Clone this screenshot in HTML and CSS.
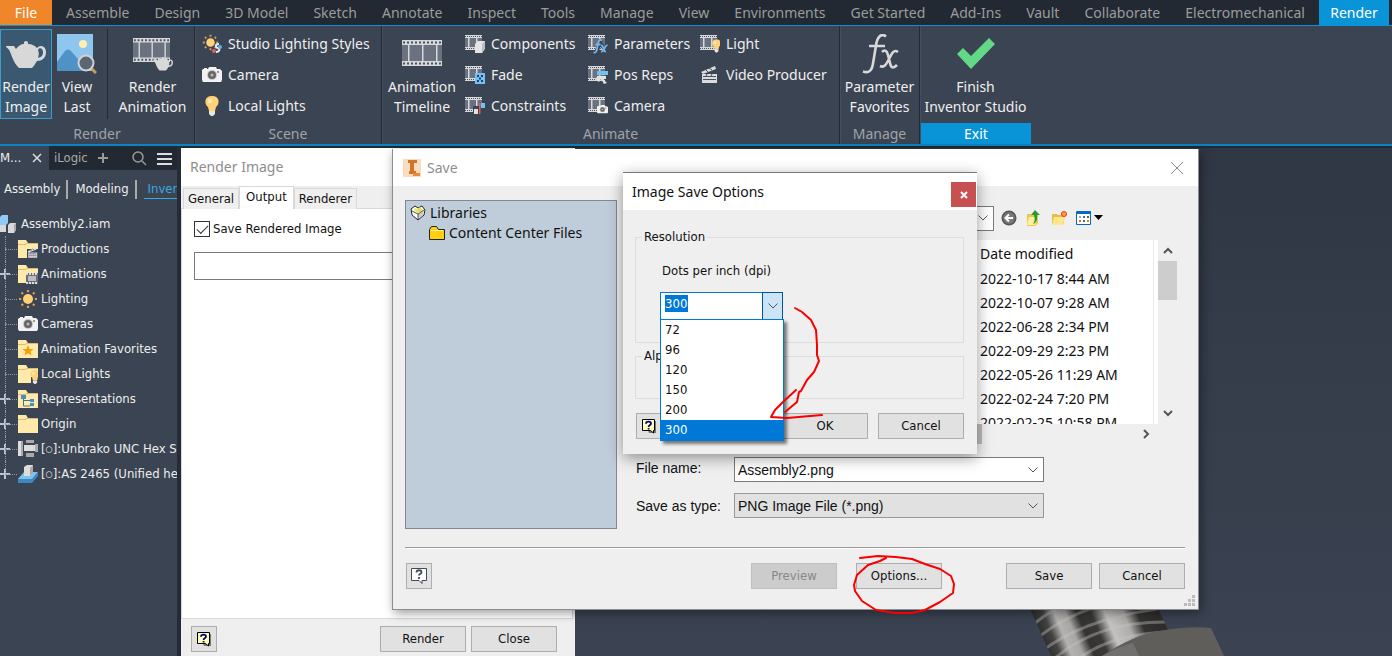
FILE: index.html
```html
<!DOCTYPE html>
<html lang="en">
<head>
<meta charset="utf-8">
<title>Inventor Studio</title>
<link rel="stylesheet" href="styles.css">
</head>
<body>
<svg class="defs" aria-hidden="true">
  <symbol id="film" viewBox="0 0 40 26">
    <path fill="#6a7280" d="M0 0h40v26H0z"/>
    <path fill="#d6d8da" d="M0 0h40v5H0zM0 21h40v5H0zM6 5h1.500v16H6zM20 5h1.500v16H20zM34 5h1.500v16H34z"/>
    <path stroke="#4a5160" stroke-width="2" stroke-dasharray="2 2" d="M1 2.500h39M1 23.500h39"/>
  </symbol>
  <symbol id="film-s" viewBox="0 0 20 20">
    <path fill="#6a7280" d="M0 1h17v15H0z"/>
    <path fill="#d6d8da" d="M0 1h17v3H0zM0 13h17v3H0zM3 4h1.500v9H3zM11 4h1.500v9H11z"/>
    <path stroke="#4a5160" stroke-dasharray="1 1" d="M0 2.500h17M0 14.500h17"/>
  </symbol>
  <symbol id="teapot" viewBox="0 0 40 28">
    <path fill="#d8d8d8" d="M18 3c-1-4 5-4 4 0 4 0 7 2 9 4 3-4 9-2 9 4 0 6-4 9-9 9-2 3-3 5-5 7H13c-3-3-5-6-6-9C5 14 4 8 0 6l0-1h8l2 3c2-3 5-5 8-5zM32 9c1 2 1 5 0 8 4-1 5-3 5-6 0-4-4-5-5-2z"/>
  </symbol>
  <symbol id="bulb" viewBox="0 0 20 20">
    <path fill="#ffd27a" d="M10 0c8 0 8 8 4 11l-1 4H7l-1-4C2 8 2 0 10 0z"/>
    <path fill="#fff0c8" d="M6 3h4v4H6z" opacity=".7"/><path fill="#e6e6e6" d="M7 15h6v3l-2 2H9l-2-2z"/>
  </symbol>
  <symbol id="camera" viewBox="0 0 20 20">
    <path fill="#f2f2f2" d="M1 4h1V3h3v1h1l1-2h7l1 2h3l2 2v9l-1 2H1l-1-2V5z"/>
    <circle cx="10" cy="10" r="5" fill="#c4c4c4"/><circle cx="10" cy="10" r="4" fill="#666"/><circle cx="10" cy="10" r="1.500" fill="#bbb"/><path fill="#999" d="M15 6h2v2h-2z"/>
  </symbol>
  <symbol id="sun" viewBox="0 0 20 20">
    <circle cx="10" cy="10" r="5" fill="#ffd27a"/>
    <path stroke="#d9a04e" stroke-width="2.200" stroke-dasharray="2.200 50" d="M10 1v9M10 19v-9M1 10h9M19 10h-9M3.500 3.500L10 10M16.500 3.500L10 10M3.500 16.500L10 10M16.500 16.500L10 10"/>
  </symbol>
  <symbol id="folder" viewBox="0 0 20 20">
    <path fill="#ffe9ab" d="M0 1h8l2 3h10v15H0z"/><path fill="none" stroke="#d8bd78" d="M0 5.500h7l2-1h11"/>
  </symbol>
  <symbol id="clapper" viewBox="0 0 20 20">
    <path fill="#dcdcdc" d="M1 7l14-6 1 3L3 9zM2 9h15v9H2z"/>
    <path stroke="#4a5160" d="M5 4l3 3M9 3l3 2M3 11.500h13M3 14.500h13M7 9l-1 2M12 9l-1 2"/>
  </symbol>
  <symbol id="chev" viewBox="0 0 12 12"><path fill="none" stroke="#555" d="M1.500 3.500L6 8l4.500-4.500"/></symbol>
  <symbol id="help" viewBox="0 0 16 16">
    <path fill="#777" d="M3 3h12v12H8z"/><path fill="#ffffb8" stroke="#000" d="M1.500 1.500h12v11h-1v2.500l-3-2.500h-8z"/>
    <path fill="none" stroke="#00007a" stroke-width="1.800" d="M5 5.800c0-3 5-3 5 0 0 1.300-2.400 1.200-2.400 3.200M7.600 10v1.600"/>
  </symbol>
</svg>

<div class="app">
  <nav class="tabs" aria-label="Ribbon tabs">
    <button class="tab file">File</button>
    <div class="tab-list">
      <button class="tab">Assemble</button><button class="tab">Design</button><button class="tab">3D Model</button><button class="tab">Sketch</button><button class="tab">Annotate</button><button class="tab">Inspect</button><button class="tab">Tools</button><button class="tab">Manage</button><button class="tab">View</button><button class="tab">Environments</button><button class="tab">Get Started</button><button class="tab">Add-Ins</button><button class="tab">Vault</button><button class="tab">Collaborate</button><button class="tab">Electromechanical</button>
    </div>
    <button class="tab active">Render</button>
  </nav>

  <header class="ribbon">
    <section class="group g-render">
      <div class="tools">
        <button class="big on"><svg width="40" height="40" viewBox="0 0 40 40"><use href="#teapot" y="7" width="40" height="28"/></svg>Render<br>Image</button>
        <button class="big view"><svg width="40" height="40" viewBox="0 0 40 40"><path fill="#8fc6ee" d="M0 0h36v37H0z"/><path fill="#4e92c6" d="M0 28L8 17q3-3 6 0l12 14v6H0z"/><circle cx="26" cy="10" r="4" fill="#fff0b0"/><path stroke="#c99a5e" stroke-width="3" d="M34 34l5 5"/><circle cx="29" cy="29" r="7.500" fill="#5d6573" stroke="#cfd2d6" stroke-width="2"/></svg>View<br>Last</button>
        <i class="divider"></i>
        <button class="big anim"><svg width="40" height="40" viewBox="0 0 40 40"><use href="#film" y="3" width="37" height="26"/><use href="#teapot" x="20" y="23" width="20" height="14"/></svg>Render<br>Animation</button>
      </div>
      <h2>Render</h2>
    </section>
    <section class="group g-scene">
      <div class="tools col">
        <button class="cmd"><svg width="20" height="20"><use href="#sun" width="17" height="17"/><path fill="none" stroke="#ececec" stroke-width="2" d="M17 10c-5 0-3 4-1 4s2 4-2 4"/><circle cx="12" cy="17" r="2" fill="#e0606a"/><circle cx="18" cy="13" r="2" fill="#58b4ee"/></svg>Studio Lighting Styles</button>
        <button class="cmd"><svg width="20" height="20"><use href="#camera"/></svg>Camera</button>
        <button class="cmd"><svg width="20" height="20"><use href="#bulb"/></svg>Local Lights</button>
      </div>
      <h2>Scene</h2>
    </section>
    <section class="group g-animate">
      <div class="tools">
        <button class="big timeline"><svg width="40" height="40" viewBox="0 0 40 40"><use href="#film" y="6" width="40" height="26"/></svg>Animation<br>Timeline</button>
        <div class="col c1">
          <button class="cmd"><svg width="20" height="20"><use href="#film-s"/><path fill="#e4e4e4" d="M10 10l3-3h7v7l-3 5h-7z"/><path fill="#bdbdbd" d="M17 10l3-3v8l-3 4z"/></svg>Components</button>
          <button class="cmd"><svg width="20" height="20"><use href="#film-s"/><path fill="#72c0f4" d="M10 8h10v11H10z"/><path fill="#20435f" d="M12 10h2v2h-2zM16 10h2v2h-2zM14 12.500h2v2h-2zM12 15h2v2h-2zM16 15h2v2h-2z"/></svg>Fade</button>
          <button class="cmd"><svg width="20" height="20"><use href="#film-s"/><path fill="#3b4453" d="M8 10h12v9H8z"/><path fill="#e0e0e0" d="M9 13h4v5H9z"/><path fill="#e45b5b" d="M14 7h1.500v11H14z"/><path fill="#72c0f4" d="M16 7h4v5h-4z"/></svg>Constraints</button>
        </div>
        <div class="col c2">
          <button class="cmd"><svg width="20" height="20"><use href="#film-s"/><path fill="none" stroke="#3b4453" stroke-width="4" d="M13 6l-5 13M13 10l6 8"/><path fill="none" stroke="#72b9ee" stroke-width="1.800" d="M14 6.500c-3-2-4 2-4.500 6-.5 4-1.500 7-4 6M7.500 10.500h5M13 11.500c3-1 2 7 5 6M19.500 11.500c-3-1-3 7-6.500 6"/></svg>Parameters</button>
          <button class="cmd"><svg width="20" height="20"><use href="#film-s"/><path fill="#72c0f4" d="M9 6h11v4H9z"/><path fill="#e0e0e0" d="M9 11h9v3h-3l4 4-3 1-3-5-2 3-3-2z"/></svg>Pos Reps</button>
          <button class="cmd"><svg width="20" height="20"><use href="#film-s"/><use href="#camera" x="9" y="8" width="11" height="11"/></svg>Camera</button>
        </div>
        <div class="col c3">
          <button class="cmd"><svg width="20" height="20"><use href="#film-s"/><use href="#bulb" x="10" y="5" width="13" height="14"/></svg>Light</button>
          <button class="cmd"><svg width="20" height="20"><use href="#clapper"/></svg>Video Producer</button>
        </div>
      </div>
      <h2>Animate</h2>
    </section>
    <section class="group g-manage">
      <div class="tools"><button class="big"><svg width="40" height="40" viewBox="0 0 40 40"><path fill="none" stroke="#d8d8d8" stroke-width="2.600" d="M26 2.500c-5-4-9 1-10 9l-3 18c-1 7-4 10-10 8M9 12h16M22 18c3-3 5-1 6 3l2 8c1 5 3 6 7 2M38 18c-4-3-6 1-9 7-3 6-5 9-9 7"/></svg>Parameter<br>Favorites</button></div>
      <h2>Manage</h2>
    </section>
    <section class="group g-exit">
      <div class="tools"><button class="big"><svg width="40" height="40" viewBox="0 0 40 40"><path fill="#62d986" d="M1 20l6-6 8 8L33 4l6 6-24 25z"/></svg>Finish<br>Inventor Studio</button></div>
      <h2 class="exit">Exit</h2>
    </section>
  </header>

  <main class="workspace">
    <aside class="browser">
      <div class="panel-tabs">
        <button class="ptab sel">M... <svg width="10" height="10"><path stroke="#ddd" stroke-width="1.500" d="M1 1l8 8M9 1l-8 8"/></svg></button>
        <button class="ptab">iLogic</button>
        <button class="ptab" aria-label="Add"><svg width="10" height="10"><path stroke="#999" stroke-width="2" d="M5 0v10M0 5h10"/></svg></button>
        <button class="ptab find" aria-label="Search"><svg width="15" height="15"><circle cx="6" cy="6" r="5" fill="none" stroke="#999" stroke-width="1.500"/><path stroke="#999" stroke-width="1.500" d="M10 10l4 4"/></svg></button>
        <button class="ptab" aria-label="Menu"><svg width="15" height="13"><path stroke="#ddd" stroke-width="2" d="M0 2h15M0 7h15M0 12h15"/></svg></button>
      </div>
      <nav class="modes"><a href="#a">Assembly</a><a href="#m">Modeling</a><a class="cur" href="#i">Inventor Studio</a></nav>
      <ul class="tree">
        <li class="root"><svg width="18" height="20"><path fill="#8fcbf5" d="M0 3l2-2h6v8l-2 2H0z"/><path fill="#d9d9d9" d="M0 11h6v7H0zM8 11l2-2h6v7l-2 3H8z"/><path fill="#aaa" d="M14 11l2-2v7l-2 3z"/></svg>Assembly2.iam</li>
        <li><svg width="20" height="20"><use href="#folder"/><path fill="#3b4453" d="M9 10h11v9H9z"/><use href="#clapper" x="9" y="8" width="12" height="12"/></svg>Productions</li>
        <li class="plus"><svg width="20" height="20"><use href="#folder"/><path fill="#666d78" d="M8 9h12v11H8z"/><path fill="none" stroke="#ddd" stroke-width="2" stroke-dasharray="2 1" d="M8 10h12M8 19h12"/><path fill="#bbb" d="M10 12h8v5h-8z"/></svg>Animations</li>
        <li><svg width="20" height="20"><use href="#sun"/></svg>Lighting</li>
        <li><svg width="20" height="20"><use href="#camera"/></svg>Cameras</li>
        <li><svg width="20" height="20"><use href="#folder"/><path fill="#f6a000" d="M10 6l1.500 4h4l-3 2.500 1 4-3.500-2.300-3.500 2.300 1-4-3-2.500h4z"/></svg>Animation Favorites</li>
        <li><svg width="20" height="20"><use href="#folder"/><path fill="#3b4453" d="M13 13h7v7h-7z"/><use href="#bulb" x="10" y="6" width="14" height="14"/></svg>Local Lights</li>
        <li class="plus"><svg width="20" height="20"><use href="#folder"/><path fill="none" stroke="#47708d" d="M5.500 8v9H12M6 11.500h6"/><path fill="#3f8fc9" d="M3 6h5v4H3zM12 10h4v3h-4zM12 14h4v3h-4z"/></svg>Representations</li>
        <li class="plus"><svg width="20" height="20"><use href="#folder"/></svg>Origin</li>
        <li class="plus"><svg width="20" height="20"><path fill="#ddd" d="M0 2h5v15H0zM6 6h11v6H6z"/><path fill="#aaa" d="M8 1h8v3H8zM8 14h8v4H8zM17 5h3v8h-3zM3 2h2v15H3z"/></svg><span>[<small>○</small>]:Unbrako UNC Hex S</span></li>
        <li class="plus"><svg width="20" height="20"><path fill="#7cc1f0" d="M0 15l6-7h14l-6 8z"/><path fill="#3f86bd" d="M0 15h14l6-7v4l-6 7H0z"/><path fill="#ddd" d="M6 3l3-2h6v8l-3 3H6z"/><path fill="#aaa" d="M12 4l3-3v8l-3 3z"/></svg><span>[<small>○</small>]:AS 2465 (Unified he</span></li>
      </ul>
    </aside>

    <div class="viewport">
      <svg class="bolt" width="200" height="50" viewBox="1028 606 200 50" aria-hidden="true">
        <defs>
          <linearGradient id="steel" gradientUnits="userSpaceOnUse" x1="1030" y1="612" x2="1150" y2="562">
            <stop offset="0" stop-color="#2c2c2c"/><stop offset=".09" stop-color="#444"/><stop offset=".17" stop-color="#b5b3b1"/><stop offset=".25" stop-color="#a8a6a4"/><stop offset=".33" stop-color="#353433"/><stop offset=".43" stop-color="#3a3938"/><stop offset=".53" stop-color="#c4c2c0"/><stop offset=".66" stop-color="#aeacaa"/><stop offset=".76" stop-color="#343332"/><stop offset="1" stop-color="#2b2a29"/>
          </linearGradient>
          <clipPath id="shank"><path d="M1029 606h128l12 26-60 24h-58z"/></clipPath>
        </defs>
        <g clip-path="url(#shank)">
          <path fill="url(#steel)" d="M1028 606h145v50h-145z"/>
          <g fill="none" stroke="#c4c2c0" stroke-width="3" opacity=".4"><path d="M1031 627q15-15 34-21"/><path d="M1036 639q30-24 64-33"/><path d="M1041 652q40-32 116-43"/><path d="M1053 660q42-38 112-38"/><path d="M1072 664q34-30 97-32"/></g>
        </g>
        <path fill="#605e5b" d="M1102 656q32-22 63-26 26-4 46-2l13 28z"/><path fill="#72706e" d="M1102 656q18-10 31-13l6 13z"/>
      </svg>
    </div>
  </main>

  <section class="window render-win" aria-label="Render Image">
    <h3 class="title">Render Image</h3>
    <div class="page-tabs"><button>General</button><button class="sel">Output</button><button>Renderer</button></div>
    <div class="page">
      <label class="check"><input type="checkbox" checked>Save Rendered Image</label>
      <input class="path" type="text" aria-label="Image path">
    </div>
    <footer><button class="btn help" aria-label="Help"><svg width="16" height="16"><use href="#help"/></svg></button><button class="btn push">Render</button><button class="btn">Close</button></footer>
  </section>

  <section class="window save-win" aria-label="Save">
    <h3 class="title"><svg width="18" height="18"><path fill="#fbdcc0" d="M0 0h18v18H0z"/><path fill="#cf7628" d="M5 1h9v3h-3v8h2v3H6v-3h1V4H5z"/><path fill="#ee8a30" d="M10 14h7v3h-7z"/></svg>Save<button class="close" aria-label="Close"><svg width="14" height="14"><path stroke="#888" d="M1 1l12 12M13 1L1 13"/></svg></button></h3>
    <div class="save-body">
      <ul class="libs">
        <li><svg width="17" height="16"><path fill="#fff" stroke="#222" d="M1 4l4-3 3 2 4-2 3 4-1 5-6 5-6-5z"/><path fill="#ccc" d="M8 9l6-4-1 5-5 4z"/><path fill="#e8e04a" d="M5 3l2 2 1-1 2-2 3 3-5 3-4-3z"/><path fill="none" stroke="#555" d="M2 6l6 3 6-4M8 9v5"/></svg>Libraries</li>
        <li class="sub"><svg width="17" height="16"><path fill="#ffcf10" stroke="#222" d="M.500 4.500l2-3h5l2 3h6v10H.500z"/><path stroke="#fff0a0" d="M2 5.500h12"/></svg>Content Center Files</li>
      </ul>
      <div class="files">
        <div class="bar">
          <span class="combo"><select aria-label="Save in"><option></option></select><svg width="12" height="12"><use href="#chev"/></svg></span>
          <button aria-label="Back"><svg width="16" height="16"><circle cx="8" cy="8" r="7.500" fill="#555"/><circle cx="8" cy="8" r="6" fill="#777"/><path fill="none" stroke="#fff" stroke-width="2" d="M12 8H5M8 4.500L4.500 8 8 11.500"/></svg></button>
          <button aria-label="Up"><svg width="16" height="16"><path fill="#eec64e" d="M1 4h4l1 1h6v8l-3 3H1z"/><path fill="#fff0a0" d="M3 7h9l-3 8H1z"/><path fill="#2a9a2a" d="M9 0l5 5h-3c1 5-1 8-4 9 2-3 2-5 1-9H5z"/></svg></button>
          <button aria-label="New folder"><svg width="16" height="16"><path fill="#e9bb49" d="M1 4h5l1 1h6v8l-2 2H1z"/><path fill="#ffe58c" d="M3 7h11l-2 8H1z"/><circle cx="13" cy="4" r="2.500" fill="#ffa12e" stroke="#e33a16"/></svg></button>
          <button class="views" aria-label="Views"><svg width="27" height="16"><path fill="#fff" stroke="#0767c8" d="M.500 1.500h14v13H.500z"/><path fill="#0767c8" d="M1 1h14v3H1z"/><path fill="#9aa" d="M3 6h2v2H3z"/><path fill="#27a" d="M7 6h2v2H7zM7 10h2v2H7z"/><path fill="#373" d="M11 6h2v2h-2z"/><path fill="#e64" d="M3 10h2v2H3z"/><path fill="#c90" d="M11 10h2v2h-2z"/><path d="M18 5h9l-4.500 5z"/></svg></button>
        </div>
        <div class="list">
          <div class="rows"><table>
            <thead><tr><th>Date modified</th></tr></thead>
            <tbody><tr><td>2022-10-17 8:44 AM</td></tr><tr><td>2022-10-07 9:28 AM</td></tr><tr><td>2022-06-28 2:34 PM</td></tr><tr><td>2022-09-29 2:23 PM</td></tr><tr><td>2022-05-26 11:29 AM</td></tr><tr><td>2022-02-24 7:20 PM</td></tr><tr><td>2022-02-25 10:58 PM</td></tr></tbody>
          </table></div>
          <div class="vbar"><svg width="12" height="20"><path fill="none" stroke="#555" stroke-width="2" d="M2 13l4-4 4 4"/></svg><i></i><svg class="down" width="12" height="20"><path fill="none" stroke="#555" stroke-width="2" d="M2 7l4 4 4-4"/></svg></div>
          <div class="hbar"><i></i><svg width="22" height="20"><path fill="none" stroke="#555" stroke-width="2" d="M8 6l4 4-4 4"/></svg></div>
        </div>
        <div class="field"><label for="fname">File name:</label><span class="combo white"><input id="fname" type="text" value="Assembly2.png"><svg width="12" height="12"><use href="#chev"/></svg></span></div>
        <div class="field"><label for="ftype">Save as type:</label><span class="combo"><select id="ftype"><option>PNG Image File (*.png)</option></select><svg width="12" height="12"><use href="#chev"/></svg></span></div>
      </div>
    </div>
    <footer>
      <button class="btn help" aria-label="Help"><svg width="18" height="18"><path fill="#fff" stroke="#444b58" d="M1.500 1.500h15v12h-4.500v3l-3-3H1.500z"/><path fill="none" stroke="#444b58" stroke-width="1.800" d="M6.500 5.500c0-3 5-3 5 0 0 1.500-2.500 1-2.500 3M9 10v2"/></svg></button>
      <button class="btn push" disabled>Preview</button><button class="btn opt">Options...</button><button class="btn sv">Save</button><button class="btn">Cancel</button>
    </footer>
    <svg class="grip" width="12" height="12" aria-hidden="true"><path fill="#bbb" d="M8 0h3v3H8zM4 4h3v3H4zM8 4h3v3H8zM0 8h3v3H0zM4 8h3v3H4zM8 8h3v3H8z"/></svg>
  </section>

  <section class="window opt-win" aria-label="Image Save Options">
    <h3 class="title">Image Save Options<button class="close red" aria-label="Close"><svg width="8" height="8"><path stroke="#fff" stroke-width="2" d="M1 1l6 6M7 1L1 7"/></svg></button></h3>
    <div class="opt-body">
      <fieldset class="res"><legend>Resolution</legend>
        <label for="dpi">Dots per inch (dpi)</label>
        <div class="dpi">
          <div class="dpi-box"><input id="dpi" type="text" value="300" role="combobox" aria-expanded="true" aria-controls="dpi-list"><button aria-label="Open"><svg width="12" height="12"><use href="#chev"/></svg></button></div>
          <ul id="dpi-list" role="listbox"><li role="option">72</li><li role="option">96</li><li role="option">120</li><li role="option">150</li><li role="option">200</li><li role="option" class="sel" aria-selected="true">300</li></ul>
        </div>
      </fieldset>
      <fieldset class="alpha"><legend>Alp</legend></fieldset>
      <footer><button class="btn help" aria-label="Help"><svg width="16" height="16"><use href="#help"/></svg></button><button class="btn push">OK</button><button class="btn">Cancel</button></footer>
    </div>
  </section>

  <svg class="ink arrow" width="60" height="120" viewBox="765 300 60 120" aria-hidden="true"><path d="M795 308l7 4 9 8 5 10 1 15v10l2 6-5 11-7 8-6 11-2 1-2 10-12 10M796 390l-13 12-8 8-4 7 16 1 35-3"/></svg>
  <svg class="ink ring" width="110" height="65" viewBox="850 552 110 65" aria-hidden="true"><path d="M860 558l18-2 18 1 16 2 13 5 15 5 11 7 3 8-1 9-13 9-15 8-13 3h-17l-19-3-14-9-7-10-1-6 3-10 11-10 12-4 6-3"/></svg>
</div>
</body>
</html>
```

FILE: styles.css
```css
* { box-sizing: border-box; }
body { margin: 0; font: 13px/20px "DejaVu Sans Condensed", "Noto Sans", sans-serif; color: #111; background: #3b4453; }
button, input, select { font: inherit; color: inherit; margin: 0; padding: 0; border: 0; background: none; }
button { white-space: nowrap; }
ul { list-style: none; margin: 0; padding: 0; }
h2, h3 { margin: 0; font-weight: 400; }
svg { display: block; flex: none; }
.defs { position: absolute; width: 0; height: 0; }
.app { position: relative; min-height: 100vh; display: flex; flex-direction: column; overflow: hidden; }

/* Ribbon */
.tabs, .ribbon, .title, .libs, .rows { font-family: "Noto Sans", "Open Sans", sans-serif; font-size: 14px; }
.tabs { display: flex; height: 26px; background: #222933; border-bottom: 1px solid #0a94d8; color: #9c9c9c; padding-right: 3px; }
.tab-list { flex: 1; display: flex; justify-content: space-between; padding: 0 14px; }
.tab.file { width: 52px; background: #f0862a; color: #fff; }
.tab.active { width: 70px; background: #0a94d8; color: #fff; }
.ribbon { display: flex; height: 120px; background: #3b4453; border-bottom: 2px solid #0a84c4; color: #eee; }
.group { display: flex; flex-direction: column; border-right: 1px solid #232a35; box-shadow: 1px 0 #454e5d; }
.group h2 { height: 21px; font-size: 14px; line-height: 22px; text-align: center; color: #a0a3a8; }
.group h2.exit { background: #0a94d8; color: #fff; margin-left: 1px; }
.tools { flex: 1; display: flex; padding-top: 2px; }
.g-render { width: 195px; }
.g-scene { width: 187px; }
.g-animate { width: 458px; }
.g-manage { width: 80px; }
.g-exit { width: 111px; border: 0; box-shadow: none; }
.big { height: 90px; padding-top: 3px; line-height: 20px; flex: 1; text-align: center; margin-top: 1px; }
.big svg { margin: 0 auto 3px; }
.big.on { flex: none; width: 52px; background: #3b5871; border: 1px solid #3c9dcb; padding-top: 2px; }
.big.view { flex: none; width: 50px; }
.big.timeline { flex: none; width: 80px; }
.divider { width: 1px; height: 90px; background: #232a35; margin: 1px 3px 0 5px; }
.col { display: flex; flex-direction: column; }
.cmd { height: 31px; display: flex; align-items: center; gap: 6px; }
.g-scene .col { padding-left: 7px; }
.c1 { width: 123px; padding-left: 3px; }
.c2 { width: 113px; padding-left: 3px; }
.c3 { padding-left: 2px; }

/* Model browser */
.workspace { flex: 1; display: flex; background: #222933; }
.browser { width: 181px; border-right: 4px solid #252c38; background: #3b4453; color: #eee; overflow: hidden; white-space: nowrap; }
.panel-tabs { display: flex; height: 24px; background: #222933; color: #aaa; }
.ptab { display: flex; align-items: center; padding: 0 5px; }
.ptab.sel { width: 49px; padding: 0 7px 0 0; background: #3b4453; color: #eee; justify-content: space-between; }
.ptab.find { margin-left: 14px; }
.modes { display: flex; padding: 10px 0 0 4px; height: 41px; }
.modes a { color: #eee; text-decoration: none; height: 19px; line-height: 18px; padding-right: 6px; margin-right: 7px; border-right: 2px solid #aaa; }
.modes .cur { color: #3aa9e0; border-right: 0; border-bottom: 1px solid #3aa9e0; padding: 0 4px; }
.tree li { display: flex; align-items: center; height: 25px; gap: 3px; padding-left: 18px; position: relative; }
.tree .root { padding-left: 0; }
.tree small { font-size: 9px; vertical-align: 1px; }
.tree li:not(.root)::before { content: ""; position: absolute; left: 5px; top: 0; width: 11px; height: 13px; border-left: 1px dotted #9299a3; border-bottom: 1px dotted #9299a3; }
.tree li:not(.root):not(:last-child)::after { content: ""; position: absolute; left: 5px; top: 12px; height: 13px; border-left: 1px dotted #9299a3; }
.tree li.plus { background: linear-gradient(#bcc6d0, #bcc6d0) 0 12px / 10px 2px no-repeat, linear-gradient(#bcc6d0, #bcc6d0) 4px 8px / 2px 10px no-repeat; }
.viewport { flex: 1; position: relative; margin-top: 2px; background: linear-gradient(#303744, #3b4352); }
.bolt { position: absolute; left: 847px; bottom: 0; }

/* Windows */
.window { position: absolute; z-index: 0; background: #efefef; display: flex; flex-direction: column; }
.title { display: flex; align-items: center; background: #fff; color: #8e8e8e; }
.btn { width: 86px; height: 26px; background: #e1e1e1; border: 1px solid #adadad; }
.btn:disabled { background: #ccc; border-color: #bfbfbf; color: #888; }
.btn.help { width: 26px; display: grid; place-items: center; }
.push { margin-left: auto; }
.window footer { display: flex; }
.combo { display: flex; align-items: center; border: 1px solid #999; background: #e1e1e1; height: 25px; padding-right: 4px; }
.combo select, .combo input { flex: 1; min-width: 0; appearance: none; padding-left: 3px; outline: 0; }
.combo.white { background: #fff; border-color: #7a7a7a; }

.render-win { left: 181px; top: 148px; bottom: 0; width: 394px; }
.render-win .title { height: 38px; padding-left: 9px; }
.page-tabs { display: flex; align-items: flex-end; height: 23px; padding-left: 2px; margin-bottom: -1px; z-index: 1; }
.page-tabs button { height: 21px; padding: 0 4px; border: 1px solid #d9d9d9; border-bottom: 0; background: #efefef; }
.page-tabs .sel { height: 23px; padding: 0 6px 3px; background: #fff; border-bottom: 0; }
.page { flex: 1; margin-right: 2px; border: 1px solid #d9d9d9; background: #fff; padding: 10px 12px; display: flex; flex-direction: column; gap: 13px; }
.check { display: flex; align-items: center; gap: 3px; }
.check input { appearance: none; width: 16px; height: 16px; border: 1px solid #333; display: grid; place-items: center; }
.check input::after { content: ""; width: 10px; height: 5px; border: solid #333; border-width: 0 0 1px 1px; rotate: -45deg; margin-bottom: 3px; }
.path { height: 28px; border: 1px solid #7a7a7a; }
.render-win footer { padding: 7px 18px 4px 10px; gap: 5px; }

.save-win { left: 392px; top: 149px; width: 807px; border: 1px solid #8a8d92; border-top: 0; box-shadow: 2px 3px 10px rgba(0, 0, 0, .4); }
.save-win .title { height: 37px; padding: 0 14px 0 10px; gap: 6px; }
.close { margin-left: auto; }
.save-body { display: flex; gap: 19px; margin: 14px 13px 0 12px; padding-bottom: 18px; border-bottom: 1px solid #999; box-shadow: 0 1px #fff; }
.libs { width: 212px; height: 329px; background: #bfccd9; border: 1px solid #808893; padding: 2px 4px; }
.libs li { display: flex; gap: 3px; height: 20px; align-items: center; }
.libs .sub { padding-left: 19px; }
.files { flex: 1; display: flex; flex-direction: column; font: 14px/18px "Liberation Sans", sans-serif; }
.bar { display: flex; align-items: center; gap: 9px; height: 26px; margin: 5px 0 9px; }
.bar .combo { width: 260px; margin: 0 -2px 0 98px; background: #fff; border-color: #7a7a7a; }
.field label { width: 98px; }
.list { display: grid; grid-template-columns: 522px 19px; grid-template-rows: 184px 20px; margin-bottom: 13px; }
.rows { overflow: hidden; background: #fff; padding-left: 344px; padding-right: 4px; }
.rows table { width: 100%; border-spacing: 0; border-right: 1px solid #e5e9f0; }
.rows th { height: 27px; padding: 0; font-weight: 400; text-align: left; }
.rows td { height: 24px; padding: 0; white-space: nowrap; }
.vbar { display: flex; flex-direction: column; align-items: center; }
.vbar i { width: 19px; height: 39px; background: #cdcdcd; margin-top: 1px; }
.vbar .down { margin-top: auto; }
.hbar { display: flex; justify-content: space-between; }
.hbar i { width: 346px; background: #bdbdbd; }
.field { display: flex; margin-bottom: 11px; }
.field label { padding-top: 2px; }
.field + .field label { padding-top: 4px; }
.field .combo { width: 310px; }
.save-win footer { padding: 15px 13px 20px; }
.opt { margin-left: 19px; }
.sv { margin: 0 7px 0 64px; }
.grip { position: absolute; right: 2px; bottom: 2px; }

.opt-win { left: 623px; top: 172px; width: 354px; border-top: 1px solid #777; box-shadow: 0 4px 14px rgba(0, 0, 0, .4); }
.opt-win .title { height: 37px; padding-left: 9px; color: #111; }
.close.red { width: 25px; height: 25px; margin: 6px 1px 0 auto; background: #c75050; display: grid; place-items: center; }
.opt-body { padding: 17px 13px 15px 12px; }
fieldset { margin: 0; border: 1px solid #dcdcdc; padding: 0 24px; }
legend { padding: 0 2px; margin-left: -18px; }
.res { height: 116px; }
.res label { display: block; padding: 14px 0 11px 2px; }
.alpha { height: 53px; margin: 3px 0 14px; }
.dpi { position: relative; width: 123px; }
.dpi-box { display: flex; height: 28px; border: 1px solid #0078d7; background: #fff; }
.dpi-box input { width: 23px; height: 17px; margin: 2px auto 0 4px; background: #0078d7; color: #fff; outline: 0; }
.dpi-box button { width: 21px; height: 28px; margin: -1px; background: #cce4f7; border: 1px solid #005499; display: grid; place-items: center; }
#dpi-list { position: absolute; z-index: 1; top: 27px; left: 0; right: -1px; background: #fff; border: 1px solid #0078d7; box-shadow: 3px 3px 3px rgba(0, 0, 0, .5); }
#dpi-list li { padding-left: 4px; }
#dpi-list .sel { background: #0078d7; color: #fff; }
.opt-win footer { gap: 10px; padding-left: 1px; }

.ink { position: absolute; z-index: 1; fill: none; stroke: #f90000; stroke-width: 2; stroke-linejoin: round; stroke-linecap: round; pointer-events: none; }
.arrow { left: 765px; top: 300px; }
.ring { left: 850px; top: 552px; }
```
